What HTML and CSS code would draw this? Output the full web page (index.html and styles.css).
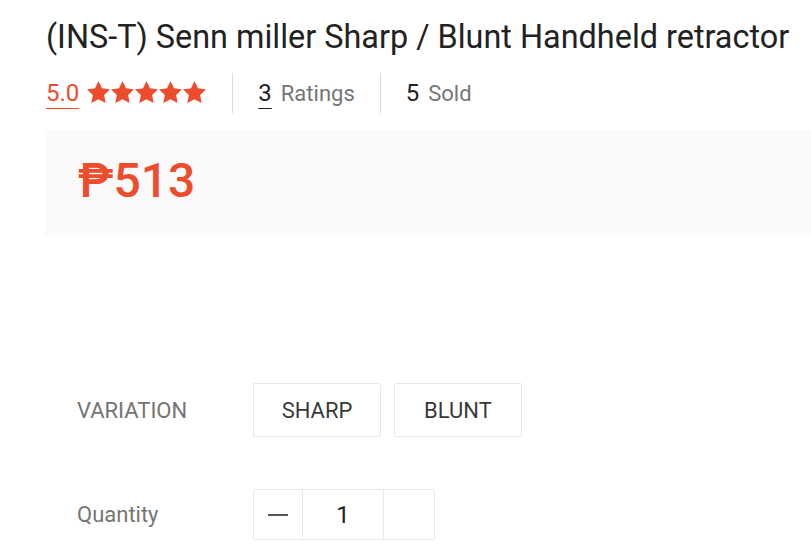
FILE: index.html
```html
<!DOCTYPE html>
<html>
<head>
<meta charset="utf-8">
<link rel="stylesheet" href="styles.css">
</head>
<body>
<div class="page">
  <h1 class="title">(INS-T) Senn miller Sharp / Blunt Handheld retractor</h1>
  <div class="stats">
    <div class="stat stat-first">
      <span class="num num-orange">5.0</span>
      <span class="stars">
        <svg viewBox="1.2 1.2 21.6 20.6" preserveAspectRatio="none" class="star"><path d="M12 1.2l3.3 6.9 7.5 1-5.5 5.2 1.4 7.5L12 18.2l-6.7 3.6 1.4-7.5L1.2 9.1l7.5-1z"/></svg>
        <svg viewBox="1.2 1.2 21.6 20.6" preserveAspectRatio="none" class="star"><path d="M12 1.2l3.3 6.9 7.5 1-5.5 5.2 1.4 7.5L12 18.2l-6.7 3.6 1.4-7.5L1.2 9.1l7.5-1z"/></svg>
        <svg viewBox="1.2 1.2 21.6 20.6" preserveAspectRatio="none" class="star"><path d="M12 1.2l3.3 6.9 7.5 1-5.5 5.2 1.4 7.5L12 18.2l-6.7 3.6 1.4-7.5L1.2 9.1l7.5-1z"/></svg>
        <svg viewBox="1.2 1.2 21.6 20.6" preserveAspectRatio="none" class="star"><path d="M12 1.2l3.3 6.9 7.5 1-5.5 5.2 1.4 7.5L12 18.2l-6.7 3.6 1.4-7.5L1.2 9.1l7.5-1z"/></svg>
        <svg viewBox="1.2 1.2 21.6 20.6" preserveAspectRatio="none" class="star"><path d="M12 1.2l3.3 6.9 7.5 1-5.5 5.2 1.4 7.5L12 18.2l-6.7 3.6 1.4-7.5L1.2 9.1l7.5-1z"/></svg>
      </span>
    </div>
    <div class="sep"></div>
    <div class="stat">
      <span class="num num-dark">3</span>
      <span class="lbl">Ratings</span>
    </div>
    <div class="sep"></div>
    <div class="stat">
      <span class="num num-plain">5</span>
      <span class="lbl">Sold</span>
    </div>
  </div>
  <div class="pricebox">
    <div class="price">₱513</div>
  </div>
  <div class="row row-variation">
    <div class="label">VARIATION</div>
    <div class="options">
      <button class="opt">SHARP</button>
      <button class="opt">BLUNT</button>
    </div>
  </div>
  <div class="row row-qty">
    <div class="label">Quantity</div>
    <div class="qty">
      <div class="qbtn qminus"><span class="minus"></span></div>
      <div class="qval">1</div>
      <div class="qbtn qplus"></div>
    </div>
  </div>
</div>
</body>
</html>
```
FILE: styles.css
```css
html, body {
  margin: 0;
  padding: 0;
  background: #fff;
}
body {
  font-family: Roboto, "Liberation Sans", sans-serif;
  overflow: hidden;
}
.page {
  padding: 18px 0 0 45px;
}
.title {
  margin: 0 0 17px 1px;
  font-size: 32.4px;
  line-height: 38px;
  font-weight: 400;
  color: #222;
  white-space: nowrap;
}
.stats {
  display: flex;
  align-items: center;
  height: 40px;
}
.stat {
  display: flex;
  align-items: center;
}
.stat-first {
  margin-right: 1px;
}
.num {
  font-size: 24px;
  line-height: 24px;
  text-decoration: underline;
  text-decoration-thickness: 1px;
  text-underline-offset: 7px;
}
.num-orange {
  color: #ee4d2d;
  margin-left: 1px;
}
.num-dark {
  color: #222;
}
.num-plain {
  color: #222;
  text-decoration: none;
}
.stars {
  display: flex;
  gap: 1px;
  margin-left: 8px;
  margin-top: -2px;
}
.star {
  width: 23px;
  height: 22px;
  fill: #ee4d2d;
  display: block;
}
.lbl {
  font-size: 22px;
  color: #767676;
  margin-left: 9px;
}
.sep {
  width: 1px;
  height: 40px;
  background: #dcdcdc;
  margin: 0 25px;
}
.pricebox {
  margin-top: 17px;
  height: 105px;
  box-sizing: border-box;
  background: #fafafa;
  padding: 27px 0 0 33px;
}
.price {
  font-size: 48px;
  line-height: 48px;
  color: #ee4d2d;
  font-weight: 500;
}
.row {
  display: flex;
  align-items: center;
  padding-left: 32px;
}
.row-variation {
  margin-top: 148px;
}
.row-qty {
  margin-top: 52px;
}
.label {
  width: 176px;
  font-size: 22px;
  color: #757575;
}
.options {
  display: flex;
  gap: 13px;
}
.opt {
  width: 128px;
  height: 54px;
  box-sizing: border-box;
  border: 1px solid rgba(0,0,0,.09);
  border-radius: 2px;
  background: #fff;
  font-family: Roboto, "Liberation Sans", sans-serif;
  font-size: 22px;
  color: rgba(0,0,0,.8);
  padding: 0;
}
.qty {
  display: flex;
  width: 182px;
  height: 51px;
  overflow: hidden;
}
.qbtn {
  width: 50px;
  height: 51px;
  box-sizing: border-box;
  border: 1px solid rgba(0,0,0,.09);
  display: flex;
  align-items: center;
  justify-content: center;
  flex: none;
}
.qminus {
  border-radius: 2px 0 0 2px;
}
.qplus {
  width: 51px;
  border-left: none;
  border-radius: 0 2px 2px 0;
}
.minus {
  width: 20px;
  height: 2px;
  background: #555;
}
.qval {
  width: 81px;
  height: 51px;
  box-sizing: border-box;
  border-top: 1px solid rgba(0,0,0,.09);
  border-bottom: 1px solid rgba(0,0,0,.09);
  border-right: 1px solid rgba(0,0,0,.09);
  display: flex;
  align-items: center;
  justify-content: center;
  font-size: 24px;
  color: #222;
  flex: none;
}
```
